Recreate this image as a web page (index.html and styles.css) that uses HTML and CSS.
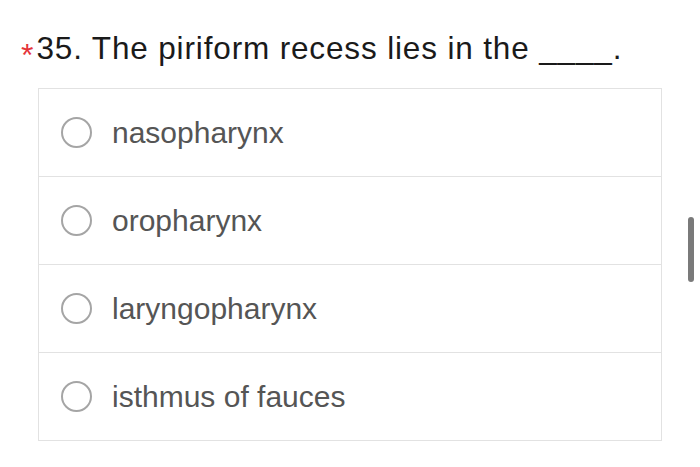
FILE: index.html
```html
<!DOCTYPE html>
<html>
<head>
<meta charset="utf-8">
<link rel="stylesheet" href="styles.css">
</head>
<body>
<div class="page">
  <h1 class="question"><span class="req">*</span>35. The piriform recess lies in the ____.</h1>
  <div class="options">
    <label class="option"><span class="radio"></span><span class="label">nasopharynx</span></label>
    <label class="option"><span class="radio"></span><span class="label">oropharynx</span></label>
    <label class="option"><span class="radio"></span><span class="label">laryngopharynx</span></label>
    <label class="option"><span class="radio"></span><span class="label">isthmus of fauces</span></label>
  </div>
</div>
<div class="scrollbar"></div>
</body>
</html>
```
FILE: styles.css
```css
html, body {
  margin: 0;
  padding: 0;
  background: #fff;
}
body {
  font-family: "Liberation Sans", Arial, sans-serif;
  width: 700px;
  height: 467px;
  overflow: hidden;
  position: relative;
}
.page {
  padding: 28px 0 0 21px;
}
.question {
  margin: 0;
  font-size: 31.5px;
  font-weight: normal;
  color: #1a1a1a;
  line-height: 40px;
  letter-spacing: 0.85px;
}
.req {
  color: #e5343a;
  font-size: 32px;
  letter-spacing: 0;
  margin-right: 3px;
  vertical-align: -0.22em;
  line-height: 0;
}
.options {
  margin-top: 20px;
  margin-left: 17px;
  width: 622px;
  border: 1px solid #e2e2e2;
}
.option {
  display: flex;
  align-items: center;
  height: 87px;
  padding-left: 22px;
  border-top: 1px solid #e2e2e2;
}
.option:first-child {
  border-top: none;
}
.radio {
  width: 31px;
  height: 31px;
  border: 2px solid #a5a5a5;
  border-radius: 50%;
  box-sizing: border-box;
  flex: none;
}
.label {
  margin-left: 20px;
  font-size: 30px;
  color: #555;
}
.scrollbar {
  position: absolute;
  left: 688px;
  top: 217px;
  width: 6px;
  height: 65px;
  border-radius: 3px;
  background: #7a7a7a;
}
```
